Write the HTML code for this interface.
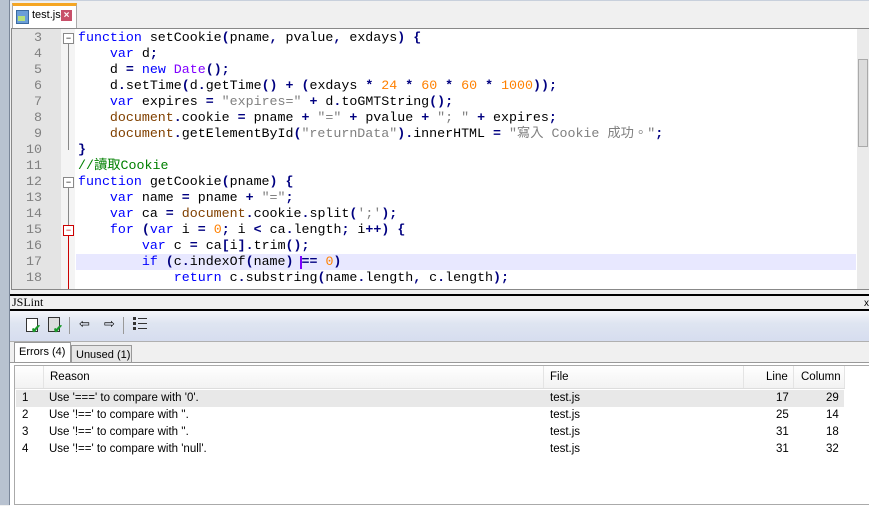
<!DOCTYPE html><html><head><style>
body{margin:0;width:869px;height:505px;overflow:hidden;background:#f0f0f0;font-family:"Liberation Sans",sans-serif;position:relative}
.a{position:absolute;white-space:nowrap}
.code{font-family:"Liberation Mono","Noto Sans CJK TC",monospace;font-size:13.3px;line-height:16px;white-space:pre}
.k{color:#0000ff}.o{color:#000080;font-weight:bold}.n{color:#ff8000}.s{color:#808080}.p{color:#8000ff}.d{color:#804000}.c{color:#008000}
.ln{color:#808080;text-align:right;width:30px;left:12px}
.row{position:absolute;left:16px;width:828px;height:17px;font-size:11.5px;line-height:17px}
.row span{position:absolute}
</style></head><body>
<div class="a" style="left:0;top:0;width:9px;height:505px;background:#b8c2d0;border-right:1px solid #7a8699"></div>
<div class="a" style="left:10px;top:0;width:859px;height:28px;background:#f0f0f0;border-top:1px solid #c8d0dc"></div>
<div class="a" style="left:12px;top:3px;width:65px;height:25px;background:#fff;border:1px solid #aaa;border-bottom:none;border-top:3px solid #f5a623;box-sizing:border-box"></div>
<div class="a" style="left:16px;top:10px;width:11px;height:12px;background:#6a9ed8;border:1px solid #3a6aa0"></div>
<div class="a" style="left:18px;top:16px;width:7px;height:5px;background:#b6e07a"></div>
<div class="a" style="left:32px;top:9px;font-size:11px">test.js</div>
<div class="a" style="left:61px;top:10px;width:11px;height:11px;background:#c8506a;color:#fff;font-size:10px;line-height:11px;text-align:center;font-weight:bold">×</div>
<div class="a" style="left:11px;top:28px;width:858px;height:262px;background:#fff;border:1px solid #888;box-sizing:border-box"></div>
<div class="a" style="left:12px;top:29px;width:49px;height:260px;background:#e4e4e4"></div>
<div class="a" style="left:61px;top:29px;width:14px;height:260px;background:#f4f4f4"></div>
<div class="a" style="left:857px;top:29px;width:12px;height:260px;background:#eaeaea"></div>
<div class="a" style="left:858px;top:59px;width:10px;height:88px;background:#dcdcdc;border:1px solid #aaa;box-sizing:border-box"></div>
<div class="a" style="left:76px;top:254px;width:780px;height:16px;background:#e8e8ff"></div>
<div class="a" style="left:68px;top:44px;width:1px;height:106px;background:#888"></div>
<div class="a" style="left:68px;top:188px;width:1px;height:101px;background:#888"></div>
<div class="a" style="left:68px;top:236px;width:1px;height:53px;background:#c00"></div>
<div class="a" style="left:63px;top:33px;width:9px;height:9px;border:1px solid #888;background:#fff;font-size:9px;line-height:8px;text-align:center">−</div>
<div class="a" style="left:63px;top:177px;width:9px;height:9px;border:1px solid #888;background:#fff;font-size:9px;line-height:8px;text-align:center">−</div>
<div class="a" style="left:63px;top:225px;width:9px;height:9px;border:1px solid #c00;background:#fff;color:#c00;font-size:9px;line-height:8px;text-align:center">−</div>
<div class="a code ln" style="top:30px">3
4
5
6
7
8
9
10
11
12
13
14
15
16
17
18</div>
<div class="a code" style="left:78px;top:30px"><span class="k">function</span> setCookie<span class="o">(</span>pname<span class="o">,</span> pvalue<span class="o">,</span> exdays<span class="o">)</span> <span class="o">{</span>
    <span class="k">var</span> d<span class="o">;</span>
    d <span class="o">=</span> <span class="k">new</span> <span class="p">Date</span><span class="o">();</span>
    d<span class="o">.</span>setTime<span class="o">(</span>d<span class="o">.</span>getTime<span class="o">()</span> <span class="o">+</span> <span class="o">(</span>exdays <span class="o">*</span> <span class="n">24</span> <span class="o">*</span> <span class="n">60</span> <span class="o">*</span> <span class="n">60</span> <span class="o">*</span> <span class="n">1000</span><span class="o">));</span>
    <span class="k">var</span> expires <span class="o">=</span> <span class="s">"expires="</span> <span class="o">+</span> d<span class="o">.</span>toGMTString<span class="o">();</span>
    <span class="d">document</span><span class="o">.</span>cookie <span class="o">=</span> pname <span class="o">+</span> <span class="s">"="</span> <span class="o">+</span> pvalue <span class="o">+</span> <span class="s">"; "</span> <span class="o">+</span> expires<span class="o">;</span>
    <span class="d">document</span><span class="o">.</span>getElementById<span class="o">(</span><span class="s">"returnData"</span><span class="o">).</span>innerHTML <span class="o">=</span> <span class="s">"寫入 Cookie 成功。"</span><span class="o">;</span>
<span class="o">}</span>
<span class="c">//讀取Cookie</span>
<span class="k">function</span> getCookie<span class="o">(</span>pname<span class="o">)</span> <span class="o">{</span>
    <span class="k">var</span> name <span class="o">=</span> pname <span class="o">+</span> <span class="s">"="</span><span class="o">;</span>
    <span class="k">var</span> ca <span class="o">=</span> <span class="d">document</span><span class="o">.</span>cookie<span class="o">.</span>split<span class="o">(</span><span class="s">';'</span><span class="o">);</span>
    <span class="k">for</span> <span class="o">(</span><span class="k">var</span> i <span class="o">=</span> <span class="n">0</span><span class="o">;</span> i <span class="o">&lt;</span> ca<span class="o">.</span>length<span class="o">;</span> i<span class="o">++)</span> <span class="o">{</span>
        <span class="k">var</span> c <span class="o">=</span> ca<span class="o">[</span>i<span class="o">].</span>trim<span class="o">();</span>
        <span class="k">if</span> <span class="o">(</span>c<span class="o">.</span>indexOf<span class="o">(</span>name<span class="o">)</span> <span class="o">==</span> <span class="n">0</span><span class="o">)</span>
            <span class="k">return</span> c<span class="o">.</span>substring<span class="o">(</span>name<span class="o">.</span>length<span class="o">,</span> c<span class="o">.</span>length<span class="o">);</span></div>
<div class="a" style="left:300px;top:256px;width:2px;height:13px;background:#8000ff"></div>
<div class="a" style="left:10px;top:294px;width:859px;height:17px;border-top:2px solid #000;border-bottom:2px solid #000;box-sizing:border-box;background:#f0f0f0;font-family:'Liberation Serif',serif;font-size:12px;line-height:13px;padding-left:2px">JSLint</div>
<div class="a" style="left:864px;top:298px;font-size:10px">x</div>
<div class="a" style="left:10px;top:311px;width:859px;height:30px;background:linear-gradient(#f4f6fa,#dfe5f1 40%,#d6ddef);border-bottom:1px solid #b0b0b0"></div>
<div class="a" style="left:26px;top:318px;width:10px;height:12px;border:1px solid #333;background:#fff"></div>
<div class="a" style="left:31px;top:322px;color:#1a9a2a;font-weight:bold;font-size:12px">✔</div>
<div class="a" style="left:48px;top:317px;width:10px;height:13px;border:1px solid #333;background:#ddd"></div>
<div class="a" style="left:53px;top:322px;color:#1a9a2a;font-weight:bold;font-size:12px">✔</div>
<div class="a" style="left:69px;top:317px;width:1px;height:17px;background:#999"></div>
<div class="a" style="left:79px;top:316px;font-size:13px">⇦</div>
<div class="a" style="left:104px;top:316px;font-size:13px">⇨</div>
<div class="a" style="left:123px;top:317px;width:1px;height:17px;background:#999"></div>
<div class="a" style="left:133px;top:317px;width:3px;height:3px;background:#333;box-shadow:0 5px #333,0 10px #333"></div>
<div class="a" style="left:138px;top:318px;width:9px;height:1px;background:#333;box-shadow:0 5px #333,0 10px #333"></div>
<div class="a" style="left:14px;top:342px;width:57px;height:21px;background:#fff;border:1px solid #999;border-bottom:none;box-sizing:border-box;font-size:11px;padding:3px 0 0 4px">Errors (4)</div>
<div class="a" style="left:71px;top:345px;width:61px;height:18px;background:#e6e6e6;border:1px solid #999;box-sizing:border-box;font-size:11px;padding:3px 0 0 4px">Unused (1)</div>
<div class="a" style="left:10px;top:362px;width:859px;height:143px;background:#fff;border-top:1px solid #999"></div>
<div class="a" style="left:14px;top:365px;width:855px;height:140px;border:1px solid #aaa;border-right:none;box-sizing:border-box"></div>
<div class="a" style="left:15px;top:366px;width:830px;height:22px;background:linear-gradient(#fff,#f2f2f2);border-bottom:1px solid #ddd;font-size:11.5px;line-height:22px">
<span class="a" style="left:28px;width:1px;height:22px;background:#e4e4e4"></span>
<span class="a" style="left:35px">Reason</span>
<span class="a" style="left:528px;width:1px;height:22px;background:#e4e4e4"></span>
<span class="a" style="left:535px">File</span>
<span class="a" style="left:728px;width:1px;height:22px;background:#e4e4e4"></span>
<span class="a" style="left:751px">Line</span>
<span class="a" style="left:778px;width:1px;height:22px;background:#e4e4e4"></span>
<span class="a" style="left:786px">Column</span>
<span class="a" style="left:829px;width:1px;height:22px;background:#e4e4e4"></span>
</div>
<div class="row" style="top:390px;background:#e8e8e8"><span style="left:6px">1</span><span style="left:33px">Use '===' to compare with '0'.</span><span style="left:534px">test.js</span><span style="left:760px">17</span><span style="left:810px">29</span></div>
<div class="row" style="top:407px"><span style="left:6px">2</span><span style="left:33px">Use '!==' to compare with ''.</span><span style="left:534px">test.js</span><span style="left:760px">25</span><span style="left:810px">14</span></div>
<div class="row" style="top:424px"><span style="left:6px">3</span><span style="left:33px">Use '!==' to compare with ''.</span><span style="left:534px">test.js</span><span style="left:760px">31</span><span style="left:810px">18</span></div>
<div class="row" style="top:441px"><span style="left:6px">4</span><span style="left:33px">Use '!==' to compare with 'null'.</span><span style="left:534px">test.js</span><span style="left:760px">31</span><span style="left:810px">32</span></div>
</body></html>
